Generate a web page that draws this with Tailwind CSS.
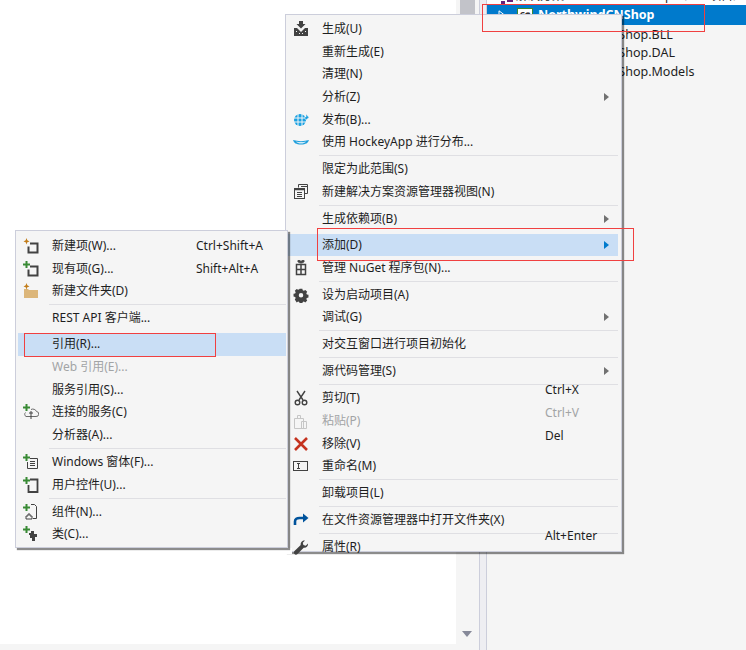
<!DOCTYPE html>
<html><head><meta charset="utf-8"><script src="https://cdn.jsdelivr.net/npm/@tailwindcss/browser@4"></script></head>
<body class="m-0">
<div class="relative w-[746px] h-[650px] overflow-hidden bg-[#f5f5f5] flex items-start text-[12px] text-[#1e1e1e] font-['Noto_Sans','Noto_Sans_CJK_SC',sans-serif]">
  <div class="w-[456px] h-[644px] bg-white shrink-0"></div>
  <div class="w-[23px] h-[650px] shrink-0 relative">
    <div class="w-[15px] h-[14px] ml-[4px] bg-[#c2c3c9]"></div>
    <svg class="absolute left-[6px] top-[631px]" width="10" height="6" viewBox="0 0 10 6"><path d="M0 0h10L5 6z" fill="#868999"/></svg>
  </div>
  <div class="w-[8px] h-[650px] shrink-0 bg-[#eeeef2] border-x border-[#cccedb]"></div>
  <div class="flex-1 h-[650px] flex flex-col">
    <div class="h-[5px] overflow-hidden relative bg-white">
      <svg class="absolute left-[13px] top-[-9px]" width="14" height="14" viewBox="0 0 14 14"><path d="M1 10h4v3H1zM7 9h6v2H7z" fill="#68217a"/></svg>
      <span class="absolute left-[29px] top-[-13px] whitespace-nowrap">解决方案'NorthwindCNShop'（4 个项目）</span>
    </div>
    <div class="h-[20px] bg-[#007acc] text-white font-bold flex items-center relative shrink-0 text-[12.5px]">
      <svg class="absolute left-[11px] top-[5px]" width="8" height="10" viewBox="0 0 8 10"><path d="M1 .8v8.4L6.5 5z" fill="none" stroke="#fff"/></svg>
      <span class="absolute left-[30px] top-[3px] w-[16px] h-[14px] bg-white border border-[#388a34] text-[#333] text-[8px] leading-[12px] text-center font-bold">C#</span>
      <span class="pl-[51px]">NorthwindCNShop</span>
    </div>
    <div class="bg-[#f5f5f5] pl-[51px] text-[12.5px]">
      <div class="h-[19px] leading-[20px]">NorthwindCNShop.BLL</div>
      <div class="h-[18.5px] leading-[18px]">NorthwindCNShop.DAL</div>
      <div class="h-[18.5px] leading-[18px]">NorthwindCNShop.Models</div>
    </div>
  </div>

  <!-- main context menu -->
  <div class="absolute left-[285px] top-[14px] w-[337px] h-[538px] bg-[#f5f5f5] border border-[#cccedb] pt-[2.6px] pl-[2px] pr-[3px] shadow-[2px_2px_1px_rgba(0,0,0,0.45)]">
    <div class="h-[22.7px] flex items-center"><span class="w-[26px] flex justify-center"><svg width="16" height="16" viewBox="0 0 16 16" fill="#424242"><path d="M6 0h4v3h2.5L8 7.5 3.500 3H6zM1 7h3l4 4 4-4h3v8H1z"/><path d="M3 10h1v1H3zM6 12h1v1H6zM9 12h1v1H9zM12 10h1v1h-1z" fill="#f5f5f5"/></svg></span><span class="ml-[8px]">生成(U)</span></div>
    <div class="h-[22.7px] flex items-center pl-[34px]">重新生成(E)</div>
    <div class="h-[22.7px] flex items-center pl-[34px]">清理(N)</div>
    <div class="h-[22.7px] flex items-center pl-[34px]">分析(Z)<svg class="ml-auto mr-[9px]" width="5" height="8" viewBox="0 0 5 8"><path d="M0 0l5 4-5 4z" fill="#717171"/></svg></div>
    <div class="h-[22.7px] flex items-center"><span class="w-[26px] flex justify-center"><svg width="16" height="16" viewBox="0 0 16 16"><circle cx="7" cy="8" r="6" fill="#1aa1e2"/><path d="M1 6h12M1 10h12M5 2v12M9 2v12" stroke="#f5f5f5" fill="none"/><path d="M11 5h2V2l3 3.500L13 8z" fill="#1aa1e2" stroke="#f5f5f5" stroke-width=".5"/></svg></span><span class="ml-[8px]">发布(B)...</span></div>
    <div class="h-[22.7px] flex items-center"><span class="w-[26px] flex justify-center"><svg width="16" height="16" viewBox="0 0 16 16"><path d="M0 6c5 1.500 11 1.500 16 0-1 3-3 4.500-8 4.500S1 9 0 6z" fill="#1f9fdc"/><path d="M3 7.500c3 .7 7 .7 10 0-1 1.500-3 2-5 2s-4-.5-5-2z" fill="#cfeaf8"/></svg></span><span class="ml-[8px]">使用 HockeyApp 进行分布...</span></div>
    <div class="h-[4.300px] pl-[31px] flex items-center"><div class="h-px w-full bg-[#dfdfe3]"></div></div>
    <div class="h-[22.7px] flex items-center pl-[34px]">限定为此范围(S)</div>
    <div class="h-[22.7px] flex items-center"><span class="w-[26px] flex justify-center"><svg width="16" height="16" viewBox="0 0 16 16" fill="none" stroke="#424242"><path d="M5.500 3.500V.5h9v9h-3"/><path d="M8 2.500h6" /><rect x="1.500" y="4.500" width="10" height="10"/><path d="M1.500 5.500h10" stroke-width="1.500"/><path d="M4 8.500h5M4 10.500h5M4 12.500h5"/></svg></span><span class="ml-[8px]">新建解决方案资源管理器视图(N)</span></div>
    <div class="h-[4.300px] pl-[31px] flex items-center"><div class="h-px w-full bg-[#dfdfe3]"></div></div>
    <div class="h-[22.7px] flex items-center pl-[34px]">生成依赖项(B)<svg class="ml-auto mr-[9px]" width="5" height="8" viewBox="0 0 5 8"><path d="M0 0l5 4-5 4z" fill="#717171"/></svg></div>
    <div class="h-[3.3px]"></div>
    <div class="h-[22.7px] flex items-center pl-[34px] bg-[#c9def5]">添加(D)<svg class="ml-auto mr-[9px]" width="5" height="8" viewBox="0 0 5 8"><path d="M0 0l5 4-5 4z" fill="#007acc"/></svg></div>
    <div class="h-[22.7px] flex items-center"><span class="w-[26px] flex justify-center"><svg width="16" height="16" viewBox="0 0 16 16" fill="none" stroke="#424242"><path d="M5 .5a2 2 0 0 1 3 1.500 2 2 0 0 1 3-1.500c1 1-1 2.500-3 2.500S4 1.500 5 .5z" fill="#424242"/><rect x="3.500" y="4.500" width="9" height="10" stroke-width="1.500"/><path d="M3 9.500h10M8 4v11" stroke-width="1.500"/></svg></span><span class="ml-[8px]">管理 NuGet 程序包(N)...</span></div>
    <div class="h-[4.300px] pl-[31px] flex items-center"><div class="h-px w-full bg-[#dfdfe3]"></div></div>
    <div class="h-[22.7px] flex items-center"><span class="w-[26px] flex justify-center"><svg width="16" height="16" viewBox="0 0 16 16"><path fill="#424242" fill-rule="evenodd" d="M6.500 1h3l.4 1.800 1.300.6 1.600-1 2.100 2.100-1 1.600.6 1.300 1.800.4v3l-1.800.4-.6 1.300 1 1.600-2.100 2.100-1.600-1-1.300.6-.4 1.800h-3l-.4-1.800-1.300-.6-1.600 1L1.100 13l1-1.600-.6-1.300L-.3 9.700v-3l1.800-.4.600-1.300-1-1.600 2.100-2.100 1.600 1 1.300-.6zM8 5.700a2.500 2.500 0 1 0 0 5 2.500 2.500 0 0 0 0-5z" transform="translate(.8 .8) scale(.9)"/></svg></span><span class="ml-[8px]">设为启动项目(A)</span></div>
    <div class="h-[22.7px] flex items-center pl-[34px]">调试(G)<svg class="ml-auto mr-[9px]" width="5" height="8" viewBox="0 0 5 8"><path d="M0 0l5 4-5 4z" fill="#717171"/></svg></div>
    <div class="h-[4.300px] pl-[31px] flex items-center"><div class="h-px w-full bg-[#dfdfe3]"></div></div>
    <div class="h-[22.7px] flex items-center pl-[34px]">对交互窗口进行项目初始化</div>
    <div class="h-[4.300px] pl-[31px] flex items-center"><div class="h-px w-full bg-[#dfdfe3]"></div></div>
    <div class="h-[22.7px] flex items-center pl-[34px]">源代码管理(S)<svg class="ml-auto mr-[9px]" width="5" height="8" viewBox="0 0 5 8"><path d="M0 0l5 4-5 4z" fill="#717171"/></svg></div>
    <div class="h-[4.300px] pl-[31px] flex items-center"><div class="h-px w-full bg-[#dfdfe3]"></div></div>
    <div class="h-[22.7px] flex items-center"><span class="w-[26px] flex justify-center"><svg width="16" height="16" viewBox="0 0 16 16" fill="none" stroke="#424242" stroke-width="1.400"><path d="M4 1l6 9M12 1L6 10"/><circle cx="4.500" cy="12.500" r="2.300"/><circle cx="11.500" cy="12.500" r="2.300"/></svg></span><span class="ml-[8px]">剪切(T)</span></div>
    <div class="h-[22.7px] flex items-center text-[#a2a4a5]"><span class="w-[26px] flex justify-center"><svg width="16" height="16" viewBox="0 0 16 16" fill="none" stroke="#c6c6c6"><path d="M1.500 5.500h9v10h-9zM8.500 8.500h5v7h-5zM4.500 5V2.500h3V5"/></svg></span><span class="ml-[8px]">粘贴(P)</span></div>
    <div class="h-[22.7px] flex items-center"><span class="w-[26px] flex justify-center"><svg width="16" height="16" viewBox="0 0 16 16" fill="none" stroke="#c5331f" stroke-width="2.600"><path d="M2 2l12 12M14 2L2 14"/></svg></span><span class="ml-[8px]">移除(V)</span></div>
    <div class="h-[22.7px] flex items-center"><span class="w-[26px] flex justify-center"><svg width="16" height="16" viewBox="0 0 16 16" fill="none" stroke="#424242"><rect x=".5" y="3.500" width="14" height="9"/><path d="M4 5.500h3M4 10.500h3M5.500 5.500v5"/></svg></span><span class="ml-[8px]">重命名(M)</span></div>
    <div class="h-[4.300px] pl-[31px] flex items-center"><div class="h-px w-full bg-[#dfdfe3]"></div></div>
    <div class="h-[22.7px] flex items-center pl-[34px]">卸载项目(L)</div>
    <div class="h-[4.300px] pl-[31px] flex items-center"><div class="h-px w-full bg-[#dfdfe3]"></div></div>
    <div class="h-[22.7px] flex items-center"><span class="w-[26px] flex justify-center"><svg width="16" height="16" viewBox="0 0 16 16" fill="none"><path d="M2 13V9.500C2 7 4 6 6.500 6H11" stroke="#00539c" stroke-width="2.600"/><path d="M10 1.500L15.500 6 10 10.500z" fill="#00539c"/></svg></span><span class="ml-[8px]">在文件资源管理器中打开文件夹(X)</span></div>
    <div class="h-[4.300px] pl-[31px] flex items-center"><div class="h-px w-full bg-[#dfdfe3]"></div></div>
    <div class="h-[22.7px] flex items-center"><span class="w-[26px] flex justify-center"><svg width="16" height="16" viewBox="0 0 16 16"><path fill="#424242" d="M15 4.500c.3 2.500-1.700 4.700-4.300 4.300L4.500 15c-.9.900-2.300.9-3 0-.9-.8-.9-2.100 0-3L7.700 6C7.300 3.300 9.500 1.200 12 1.500L9.800 3.800l.6 2.300 2.300.6z"/></svg></span><span class="ml-[8px]">属性(R)</span></div>
    <div class="absolute left-[259px] top-[374px] w-[55px] text-[#a2a4a5] leading-[22px] hidden"></div>
  </div>
  <!-- shortcuts in main menu -->
  <span class="absolute left-[545px] top-[381px] text-[#1e1e1e]">Ctrl+X</span>
  <span class="absolute left-[545px] top-[404px] text-[#a2a4a5]">Ctrl+V</span>
  <span class="absolute left-[545px] top-[427px]">Del</span>
  <span class="absolute left-[545px] top-[527px]">Alt+Enter</span>

  <!-- white cut at lower-left of main menu under the submenu -->
  <div class="absolute left-[285px] top-[548px] w-[7px] h-[6px] bg-white"></div>

  <!-- submenu -->
  <div class="absolute left-[15px] top-[230px] w-[273px] h-[318px] bg-[#f5f5f5] border border-[#cccedb] pt-[3.6px] pl-[2px] pr-[1px] shadow-[2px_2px_1px_rgba(0,0,0,0.45)]">
    <div class="h-[22.7px] flex items-center"><span class="w-[26px] flex justify-center"><svg width="16" height="16" viewBox="0 0 16 16"><path d="M3.500 0l.8 2.200L6.500 3.500l-2.200.8L3.500 6.500l-.8-2.200L.5 3.500l2.200-1.300z" fill="#c27d1a"/><path d="M7 5.500h7.500v9h-9V8.500" fill="none" stroke="#424242" stroke-width="2"/></svg></span><span class="ml-[8px]">新建项(W)...</span><span class="ml-auto w-[90px]">Ctrl+Shift+A</span></div>
    <div class="h-[22.7px] flex items-center"><span class="w-[26px] flex justify-center"><svg width="16" height="16" viewBox="0 0 16 16"><path d="M2.500 0h2v2.500H7v2H4.500V7h-2V4.500H0v-2h2.500z" fill="#388a34"/><path d="M7 5.500h7.500v9h-9V8.500" fill="none" stroke="#424242" stroke-width="2"/></svg></span><span class="ml-[8px]">现有项(G)...</span><span class="ml-auto w-[90px]">Shift+Alt+A</span></div>
    <div class="h-[22.7px] flex items-center"><span class="w-[26px] flex justify-center"><svg width="16" height="16" viewBox="0 0 16 16"><path d="M1 6h4l1 1h9v8H1z" fill="#dcb67a"/><path d="M3.500 0l.8 2.200L6.500 3.500l-2.200.8L3.500 6.500l-.8-2.200L.5 3.500l2.200-1.300z" fill="#c27d1a"/></svg></span><span class="ml-[8px]">新建文件夹(D)</span></div>
    <div class="h-[4.300px] pl-[31px] flex items-center"><div class="h-px w-full bg-[#dfdfe3]"></div></div>
    <div class="h-[22.7px] flex items-center pl-[34px]">REST API 客户端...</div>
    <div class="h-[3.300px]"></div>
    <div class="h-[22.7px] flex items-center pl-[34px] bg-[#c9def5]">引用(R)...</div>
    <div class="h-[22.7px] flex items-center pl-[34px] text-[#a2a4a5]">Web 引用(E)...</div>
    <div class="h-[22.7px] flex items-center pl-[34px]">服务引用(S)...</div>
    <div class="h-[22.7px] flex items-center"><span class="w-[26px] flex justify-center"><svg width="16" height="16" viewBox="0 0 16 16"><path d="M2.500 0h2v2.500H7v2H4.500V7h-2V4.500H0v-2h2.500z" fill="#388a34"/><path d="M2.500 8.500A2.500 2.500 0 0 0 3 12.500h10a2.500 2.500 0 0 0 .5-5 4 4 0 0 0-5.500-2" fill="none" stroke="#6a6a6a"/><path d="M8 7v8M6 9h4" stroke="#424242" fill="none"/></svg></span><span class="ml-[8px]">连接的服务(C)</span></div>
    <div class="h-[22.7px] flex items-center pl-[34px]">分析器(A)...</div>
    <div class="h-[4.300px] pl-[31px] flex items-center"><div class="h-px w-full bg-[#dfdfe3]"></div></div>
    <div class="h-[22.7px] flex items-center"><span class="w-[26px] flex justify-center"><svg width="16" height="16" viewBox="0 0 16 16"><path d="M2.500 0h2v2.500H7v2H4.500V7h-2V4.500H0v-2h2.500z" fill="#388a34"/><path d="M7 4.500h7.500v10h-10V8" fill="none" stroke="#424242"/><path d="M7 7.500h5M7 9.500h5M7 11.500h5" stroke="#424242"/></svg></span><span class="ml-[8px]">Windows 窗体(F)...</span></div>
    <div class="h-[22.7px] flex items-center"><span class="w-[26px] flex justify-center"><svg width="16" height="16" viewBox="0 0 16 16"><path d="M2.500 0h2v2.500H7v2H4.500V7h-2V4.500H0v-2h2.500z" fill="#388a34"/><path d="M7 2.500h7.500v12.500h-9V8" fill="none" stroke="#424242" stroke-width="1.800"/></svg></span><span class="ml-[8px]">用户控件(U)...</span></div>
    <div class="h-[4.300px] pl-[31px] flex items-center"><div class="h-px w-full bg-[#dfdfe3]"></div></div>
    <div class="h-[22.7px] flex items-center"><span class="w-[26px] flex justify-center"><svg width="16" height="16" viewBox="0 0 16 16"><path d="M2.500 0h2v2.500H7v2H4.500V7h-2V4.500H0v-2h2.500z" fill="#388a34"/><path d="M8 .5h3.500l2 2v12H10" fill="none" stroke="#424242"/><path d="M5 10h2v2h2v3H3v-3h2z" fill="none" stroke="#424242"/></svg></span><span class="ml-[8px]">组件(N)...</span></div>
    <div class="h-[22.7px] flex items-center"><span class="w-[26px] flex justify-center"><svg width="16" height="16" viewBox="0 0 16 16"><path d="M2.500 0h2v2.500H7v2H4.500V7h-2V4.500H0v-2h2.500z" fill="#388a34"/><path d="M8 5h3v3h3v3h-2v4h-3v-3H7V9H6V7h2z" fill="#424242"/></svg></span><span class="ml-[8px]">类(C)...</span></div>
  </div>

  <!-- red annotation boxes -->
  <div class="absolute left-[482px] top-[4px] w-[223px] h-[28px] border border-[#f04040]"></div>
  <div class="absolute left-[317px] top-[228px] w-[317px] h-[33px] border border-[#f04040]"></div>
  <div class="absolute left-[24px] top-[333px] w-[192px] h-[24px] border border-[#f04040]"></div>
</div>
</body></html>
